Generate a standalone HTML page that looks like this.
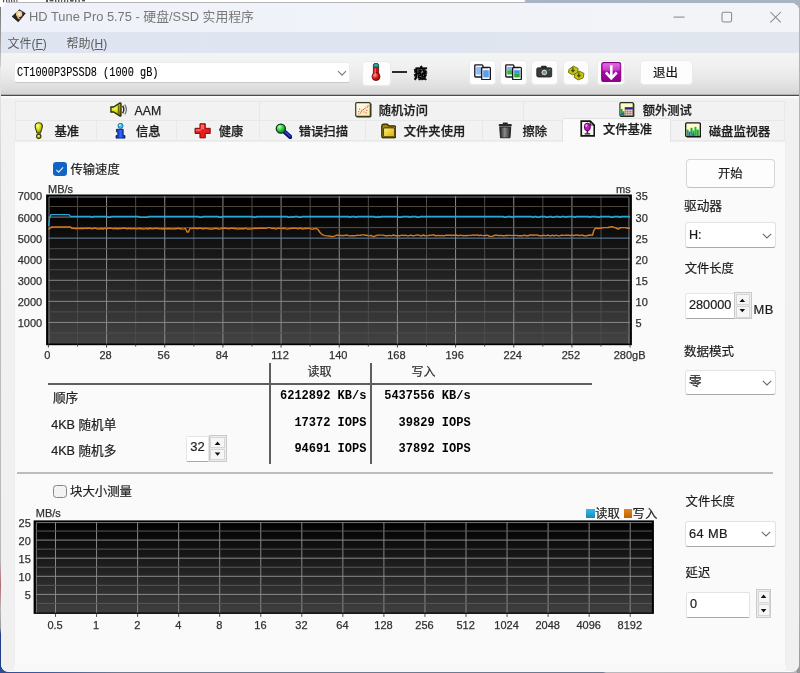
<!DOCTYPE html>
<html lang="zh-CN">
<head>
<meta charset="utf-8">
<title>HD Tune Pro 5.75 - 硬盘/SSD 实用程序</title>
<style>
html,body{margin:0;padding:0;}
body{width:800px;height:673px;overflow:hidden;position:relative;background:#8c949c;
  font-family:"Liberation Sans","Noto Sans CJK SC",sans-serif;font-size:12px;color:#1a1a1a;}
.abs{position:absolute;}
#desk-top{left:0;top:0;width:800px;height:4px;background:linear-gradient(90deg,#fff 0,#fff 524px,#a6b4c3 526px,#a6b4c3 100%);}
#desk-left{left:0;top:0;width:2.4px;height:673px;background:linear-gradient(180deg,#fff 0,#e8e8e8 60px,#bdbdbd 300px,#b9b9b9 560px,#b06a72 585px,#b9b9b9 610px,#9a9a9a 628px,#1f3f8a 634px,#1f3f8a 100%);}
#desk-bottom{left:0;top:669px;width:800px;height:4px;background:linear-gradient(90deg,#2c4c97 0,#3a5aa0 40px,#6e7c94 120px,#6c7a92 603px,#b6babf 606px,#b0b4ba 100%);}
#win{will-change:transform;left:1.1px;top:3px;width:797.6px;height:668.5px;box-shadow:inset 0 0 0 1px rgba(255,255,255,0.75);border-radius:8px;background:#f0f0f0;overflow:hidden;}
#titlebar{left:0;top:0;width:798px;height:29px;background:linear-gradient(90deg,#eef1f9 0,#f1f3f9 50%,#f3f4f8 100%);}
#title{left:28.1px;top:3.1px;font-size:12.85px;color:#787878;white-space:nowrap;letter-spacing:0px;}
#menubar{left:0;top:29px;width:798px;height:21px;background:linear-gradient(90deg,#dee5f1 0,#dfe5f0 50%,#e1e6ee 100%);}
.menu{top:2.2px;font-size:12px;color:#5c5c5c;white-space:nowrap;}
#toolbar{left:0;top:50px;width:798px;height:43px;background:linear-gradient(180deg,#f4f4f4 0,#f1f1f1 12px,#e9e9e9 24px,#dedede 35px,#d2d2d2 41.4px,#4a4a4a 41.8px,#4a4a4a 43px);}
#tabarea{left:0;top:93px;width:798px;height:575px;background:linear-gradient(180deg,#fbfbfb 0,#fbfbfb 1.5px,#f1f1f1 2.5px,#f0f0f0 100%);}
.tab{box-sizing:border-box;border:1px solid #e8e8e8;background:#f2f2f2;height:21px;white-space:nowrap;font-size:12px;color:#111;}
.tab span{position:absolute;top:4px;}
#pane{left:13.1px;top:137.5px;width:771.8px;height:526.5px;background:#fafafa;border:1px solid #eeeeee;box-sizing:border-box;}
.lbl{position:absolute;white-space:nowrap;font-size:12px;color:#1a1a1a;-webkit-text-stroke:0.22px #2a2a2a;}
.ax{position:absolute;white-space:nowrap;font-size:11px;color:#2a2a2a;line-height:11px;-webkit-text-stroke:0.25px #3a3a3a;margin-top:0.4px;}
.axr{text-align:right;width:40px;}
.axc{text-align:center;width:40px;margin-left:-20px;}
.mono{position:absolute;white-space:pre;font-family:"Liberation Mono",monospace;font-weight:bold;font-size:12px;color:#000;line-height:12px;}
.combo{position:absolute;box-sizing:border-box;background:#fff;border:1px solid #e2e2e2;border-bottom-color:#a9a9a9;border-radius:3px;}
.btn{position:absolute;box-sizing:border-box;background:#fdfdfd;border:1px solid #d6d6d6;border-bottom-color:#c2c2c2;border-radius:4px;text-align:center;}
.tbtn{position:absolute;box-sizing:border-box;background:#fdfdfd;border:1px solid #ebebeb;border-radius:4px;}
.tabt{position:absolute;white-space:nowrap;font-size:12.3px;color:#1c1c1c;line-height:14px;font-weight:500;-webkit-text-stroke:0.25px #2a2a2a;}
#drive{font-family:"Liberation Mono","Noto Sans CJK SC",monospace;font-size:12px;line-height:13px;color:#000;white-space:pre;transform-origin:0 0;transform:scaleX(0.854);-webkit-text-stroke:0.12px #000;}
#degc{font-family:"Liberation Sans","Noto Sans CJK SC","Noto Sans CJK TC","Noto Sans CJK JP",sans-serif;font-weight:900;font-size:13.6px;line-height:16px;color:#000;-webkit-text-stroke:0.4px #000;}
</style>
</head>
<body>

<svg width="0" height="0" style="position:absolute">
<defs>
<radialGradient id="rgY" cx="0.35" cy="0.3" r="0.8"><stop offset="0" stop-color="#fbffa0"/><stop offset="0.5" stop-color="#d6dc00"/><stop offset="1" stop-color="#6e6e00"/></radialGradient>
<radialGradient id="rgG" cx="0.35" cy="0.3" r="0.8"><stop offset="0" stop-color="#b8ffb0"/><stop offset="0.55" stop-color="#22c43a"/><stop offset="1" stop-color="#0a7a1a"/></radialGradient>
<radialGradient id="rgR" cx="0.35" cy="0.3" r="0.8"><stop offset="0" stop-color="#ff9a9a"/><stop offset="0.5" stop-color="#e01818"/><stop offset="1" stop-color="#8a0000"/></radialGradient>
<linearGradient id="lgP" x1="0" y1="0" x2="0" y2="1"><stop offset="0" stop-color="#e050e0"/><stop offset="0.5" stop-color="#b000b0"/><stop offset="1" stop-color="#8a008a"/></linearGradient>
<linearGradient id="lgF" x1="0" y1="0" x2="1" y2="1"><stop offset="0" stop-color="#fff27a"/><stop offset="1" stop-color="#d8ac00"/></linearGradient>
<linearGradient id="lgRand" x1="0" y1="0" x2="0.6" y2="1"><stop offset="0" stop-color="#ffffff"/><stop offset="1" stop-color="#fbeeb4"/></linearGradient>
<linearGradient id="lgT" x1="0" y1="0" x2="1" y2="0"><stop offset="0" stop-color="#222"/><stop offset="0.45" stop-color="#8a8a8a"/><stop offset="1" stop-color="#222"/></linearGradient>
<linearGradient id="lgB" x1="0" y1="0" x2="1" y2="0"><stop offset="0" stop-color="#0a2a9a"/><stop offset="0.5" stop-color="#2a6aff"/><stop offset="1" stop-color="#0a2a9a"/></linearGradient>

<symbol id="i-therm" viewBox="0 0 10 18">
  <rect x="2.4" y="0.5" width="5.2" height="12.5" rx="2" fill="#cc1010" stroke="#5a0a0a" stroke-width="0.8"/>
  <path d="M2.4 3.9 V2.5 Q2.4 0.5 4.4 0.5 H5.6 Q7.6 0.5 7.6 2.5 V3.9 Z" fill="#2aa8a0" stroke="#1a5a56" stroke-width="0.8"/>
  <circle cx="5" cy="13.6" r="4" fill="url(#rgR)" stroke="#5a0a0a" stroke-width="0.8"/>
  <rect x="3.6" y="5.4" width="1.2" height="7" fill="#ff8a8a" opacity="0.8"/>
</symbol>
<symbol id="i-copy" viewBox="0 0 18 17">
  <rect x="0.8" y="0.8" width="8.4" height="12.6" rx="1" fill="#f2f7ff" stroke="#1c1622" stroke-width="1.4"/>
  <rect x="2.3" y="3" width="5.4" height="7.8" fill="#8cbcf0"/>
  <rect x="7.9" y="3.6" width="9" height="12.6" rx="1" fill="#f2f7ff" stroke="#1c1622" stroke-width="1.4"/>
  <rect x="9.5" y="6.4" width="5.8" height="7.4" fill="#5e9ce8"/>
  <path d="M14.4 4.4 L16.1 4.4 L16.1 6.2 Z" fill="#fff"/>
</symbol>
<symbol id="i-copyimg" viewBox="0 0 18 17">
  <rect x="0.8" y="0.8" width="8.4" height="12.6" rx="1" fill="#f2f7ff" stroke="#1c1622" stroke-width="1.4"/>
  <rect x="2.3" y="3" width="5.4" height="3.4" fill="#7ab4f0"/><rect x="2.3" y="6.4" width="5.4" height="4.4" fill="#34b83c"/>
  <rect x="7.9" y="3.6" width="9" height="12.6" rx="1" fill="#f2f7ff" stroke="#1c1622" stroke-width="1.4"/>
  <rect x="9.5" y="6.4" width="5.8" height="3.2" fill="#4a90e8"/><rect x="9.5" y="9.6" width="5.8" height="4.2" fill="#26ac2c"/>
  <path d="M14.4 4.4 L16.1 4.4 L16.1 6.2 Z" fill="#fff"/>
</symbol>
<symbol id="i-cam" viewBox="0 0 18 14">
  <rect x="5.5" y="0.8" width="6" height="3.4" rx="0.8" fill="#2a2a2a"/>
  <rect x="0.8" y="3" width="16.4" height="10" rx="1.6" fill="#3a3a3a" stroke="#1a1a1a" stroke-width="0.8"/>
  <circle cx="9" cy="8" r="3.6" fill="#cfd4d0" stroke="#1a1a1a" stroke-width="0.9"/>
  <circle cx="9" cy="8" r="1.8" fill="#7a8a80"/>
  <rect x="13.6" y="4.6" width="2" height="1.6" fill="#2a9a5a"/>
</symbol>
<symbol id="i-save2" viewBox="0 0 20 18">
  <path d="M2 5 L7 1.2 L12.5 4 L11.5 9 L6 11 L1.5 8.5 Z" fill="#c6c612" stroke="#6a6a08" stroke-width="1"/>
  <path d="M6.5 2.6 L6.5 7 M4.8 5.4 L6.5 7.6 L8.4 5.4" stroke="#4a4a0a" stroke-width="1.3" fill="none"/>
  <path d="M8.5 10.5 L13.5 6.8 L19 9.5 L18 14.5 L12.5 16.8 L8 14 Z" fill="#c6c612" stroke="#6a6a08" stroke-width="1"/>
  <path d="M13.2 8.2 L13.2 12.6 M11.5 11 L13.2 13.2 L15.1 11" stroke="#4a4a0a" stroke-width="1.3" fill="none"/>
</symbol>
<symbol id="i-down" viewBox="0 0 20 20">
  <rect x="0.5" y="0.5" width="19" height="19" rx="2.2" fill="url(#lgP)" stroke="#7a007a" stroke-width="1"/>
  <rect x="1.6" y="1.6" width="16.8" height="7" rx="1.6" fill="#fff" opacity="0.18"/>
  <path d="M10 3.2 L10 15" stroke="#fff" stroke-width="2.6"/>
  <path d="M4.6 10.4 L10 16.2 L15.4 10.4" stroke="#fff" stroke-width="2.6" fill="none" stroke-linejoin="miter"/>
</symbol>

<symbol id="i-speaker" viewBox="0 0 18 15">
  <path d="M0.9 5 L3.6 5 L10 0.9 Q11 0.6 11 1.6 L11 13.4 Q11 14.4 10 14.1 L3.6 10 L0.9 10 Z" fill="url(#rgY)" stroke="#2e2c00" stroke-width="1.3"/>
  <path d="M8.6 3.4 L8.6 11.6" stroke="#6a6600" stroke-width="1.4"/>
  <path d="M12.6 3.8 Q15.2 7.5 12.6 11.2" stroke="#2a2a2a" stroke-width="1.5" fill="none"/>
  <path d="M14.8 2.6 Q18 7.5 14.8 12.4" stroke="#6a6a6a" stroke-width="1.2" fill="none"/>
</symbol>
<symbol id="i-rand" viewBox="0 0 17 16">
  <rect x="0.9" y="0.9" width="15.6" height="14.6" rx="1.4" fill="#2e2e14"/>
  <rect x="0.7" y="0.7" width="14.6" height="13.6" rx="1" fill="url(#lgRand)" stroke="#3a3a1a" stroke-width="1.2"/>
  <g fill="#e0684a"><rect x="3" y="9" width="1.2" height="1.2"/><rect x="5" y="10.3" width="1.2" height="1.2"/><rect x="6.4" y="7.6" width="1.2" height="1.2"/><rect x="8.2" y="9.4" width="1.2" height="1.2"/><rect x="9.4" y="6" width="1.2" height="1.2"/><rect x="11.2" y="7.8" width="1.2" height="1.2"/><rect x="12" y="4.4" width="1.2" height="1.2"/><rect x="4" y="6.6" width="1.2" height="1.2"/><rect x="10.6" y="10.4" width="1.2" height="1.2"/></g>
  <g fill="#5a7ad8"><rect x="3.4" y="11.4" width="1" height="1"/><rect x="5.8" y="8.8" width="1" height="1"/><rect x="8" y="7" width="1" height="1"/><rect x="10.4" y="4.6" width="1" height="1"/><rect x="12.6" y="3" width="1" height="1"/></g>
</symbol>
<symbol id="i-extra" viewBox="0 0 16 16">
  <rect x="1" y="1" width="14.6" height="14.6" rx="1.2" fill="#1a2a1a"/>
  <rect x="0.7" y="0.7" width="13.8" height="13.8" rx="1" fill="#fffac8" stroke="#22301c" stroke-width="1.2"/>
  <rect x="1.4" y="7.2" width="2" height="6.8" fill="#14a834"/><rect x="3.4" y="9.6" width="1.8" height="4.4" fill="#10902c"/><rect x="1.4" y="11.6" width="3.8" height="2.4" fill="#2a5ad8"/>
  <rect x="6" y="5.6" width="8" height="8.4" fill="#f6dcd4" stroke="#6a3a4a" stroke-width="0.6"/>
  <rect x="6" y="5.6" width="8" height="2.2" fill="#1c2a8a"/>
  <path d="M6 10 H14 M6 12 H14 M8.6 7.8 V14 M11.2 7.8 V14" stroke="#9a5a6a" stroke-width="0.6"/>
</symbol>
<symbol id="i-excl" viewBox="0 0 10 18">
  <path d="M5 0.7 C8.6 0.7 9.2 3 8.6 5.8 L6.8 11.6 L3.2 11.6 L1.4 5.8 C0.8 3 1.4 0.7 5 0.7 Z" fill="url(#rgY)" stroke="#34320a" stroke-width="1.1"/>
  <circle cx="5" cy="15" r="2.3" fill="url(#rgY)" stroke="#34320a" stroke-width="1.1"/>
</symbol>
<symbol id="i-info" viewBox="0 0 11 16">
  <circle cx="5.5" cy="2.9" r="2.6" fill="#38c8ec" stroke="#0a5a8a" stroke-width="0.8"/>
  <circle cx="4.8" cy="2.2" r="0.9" fill="#c8f4ff"/>
  <path d="M1.4 6.4 H8.2 V12.8 H10 V15.4 H1 V12.8 H2.8 V9 H1.4 Z" fill="url(#lgB)" stroke="#06186a" stroke-width="0.9"/>
</symbol>
<symbol id="i-cross" viewBox="0 0 17 16">
  <path d="M5.8 0.8 H11.2 V5.4 H16.2 V10.6 H11.2 V15.2 H5.8 V10.6 H0.8 V5.4 H5.8 Z" fill="#e81c1c" stroke="#7a0a0a" stroke-width="1"/>
  <path d="M6.6 1.8 H10 V6.4 H6.6 Z M1.8 6.4 H6.6 V8 H1.8 Z" fill="#ff8a8a" opacity="0.7"/>
</symbol>
<symbol id="i-mag" viewBox="0 0 18 16">
  <path d="M9.6 8.6 L15.6 14" stroke="#081468" stroke-width="4.4" stroke-linecap="round"/>
  <path d="M10 8.4 L15.4 13.2" stroke="#2a4ae8" stroke-width="1.5" stroke-linecap="round"/>
  <circle cx="6" cy="5.4" r="4.7" fill="url(#rgG)" stroke="#0a3a14" stroke-width="1.3"/>
</symbol>
<symbol id="i-folder" viewBox="0 0 16 16">
  <path d="M0.8 3.2 Q0.8 1.2 2.8 1.2 L5.8 1.2 Q6.8 1.2 7.4 2.2 L8 3 L13.2 3 Q15.2 3 15.2 5 L15.2 13.2 Q15.2 15.2 13.2 15.2 L2.8 15.2 Q0.8 15.2 0.8 13.2 Z" fill="#a08400" stroke="#2a2200" stroke-width="1.2"/>
  <rect x="2.6" y="5" width="11.2" height="9" rx="1.2" fill="url(#lgF)" stroke="#3a2e00" stroke-width="0.9"/>
</symbol>
<symbol id="i-trash" viewBox="0 0 15 17">
  <rect x="5" y="0.4" width="5" height="2" fill="#222"/>
  <rect x="0.8" y="2" width="13.4" height="2.6" rx="0.8" fill="#2a2a2a"/>
  <path d="M1.8 5.2 H13.2 L12.4 16.2 H2.6 Z" fill="url(#lgT)" stroke="#111" stroke-width="0.9"/>
</symbol>
<symbol id="i-fbench" viewBox="0 0 16 18">
  <path d="M1.1 1.1 H10.6 L14.9 5.4 V16.9 H1.1 Z" fill="#fbfbf4" stroke="#161616" stroke-width="1.8"/>
  <path d="M10.6 1.1 V5.4 H14.9" fill="none" stroke="#161616" stroke-width="1.1"/>
  <ellipse cx="7.6" cy="7.4" rx="3.2" ry="4.1" fill="#c414c4" stroke="#4a004a" stroke-width="0.9"/>
  <ellipse cx="6.6" cy="6" rx="1.1" ry="1.5" fill="#f4a0f4"/>
  <rect x="6.8" y="11.2" width="1.7" height="3" fill="#5a005a"/>
  <rect x="4.8" y="14" width="5.8" height="1.4" fill="#2a2a2a"/>
</symbol>
<symbol id="i-mon" viewBox="0 0 17 16">
  <rect x="1" y="1" width="15.6" height="14.6" rx="1.4" fill="#101010"/>
  <rect x="0.7" y="0.7" width="14.8" height="13.8" rx="1" fill="#fffbd0" stroke="#161616" stroke-width="1.3"/>
  <g><rect x="1.6" y="7.6" width="2" height="6.4" fill="#12b02a"/><rect x="3.6" y="9.6" width="2" height="4.4" fill="#2a5ae0"/><rect x="5.6" y="5.8" width="2" height="8.2" fill="#12b02a"/><rect x="7.6" y="8.6" width="2" height="5.4" fill="#18b830"/><rect x="9.6" y="4.8" width="2" height="9.2" fill="#18c030"/><rect x="11.6" y="7.6" width="2.4" height="6.4" fill="#12b02a"/><rect x="7.6" y="11.4" width="2" height="2.6" fill="#2a5ae0"/></g>
</symbol>
</defs>
</svg>

<div class="abs" style="left:0;top:0;width:14px;height:14px;background:#fff"></div>
<div id="desk-top" class="abs"></div>
<svg class="abs" style="left:0;top:0" width="260" height="3" viewBox="0 0 260 3"><g fill="#555"><rect x="3" y="0" width="1.2" height="2.4"/><rect x="6" y="0" width="1.2" height="2.4"/><rect x="8.6" y="0" width="1.2" height="2.2"/><rect x="11" y="0" width="1.2" height="2.4"/><rect x="13.6" y="0" width="1.2" height="2.4"/><rect x="16.4" y="0" width="1" height="2"/><rect x="46" y="0" width="2" height="2"/><rect x="49.5" y="0" width="4" height="1.4"/><rect x="55" y="0" width="1.4" height="2.2"/><rect x="58" y="0" width="1.4" height="2.2"/><rect x="61" y="0" width="1.2" height="2"/><rect x="64" y="0" width="1.4" height="2.2"/><rect x="67" y="0" width="1.2" height="2"/><rect x="70" y="0" width="3.6" height="1.6"/><rect x="75" y="0" width="1.4" height="2.2"/><rect x="78.4" y="0" width="1.4" height="2.2"/><rect x="82" y="0" width="3" height="1.4"/></g></svg>
<div id="desk-left" class="abs"></div>
<div class="abs" style="left:7px;top:2.2px;width:519px;height:1.2px;background:#b4b4b4"></div>
<div class="abs" style="left:0.4px;top:7px;width:1px;height:60px;background:linear-gradient(180deg,#777,#999 50%,#d0d0d0)"></div>
<div id="desk-bottom" class="abs"></div>
<div class="abs" style="left:797px;top:0;width:3px;height:673px;background:linear-gradient(180deg,#a6b4c3 0,#b2b4b8 80px,#b4b4b4 200px,#b2b2b2 600px,#9a9ea4 660px,#8c949c 673px)"></div>
<div id="win" class="abs">
  <div id="titlebar" class="abs"></div>
  <div id="title" class="abs">HD Tune Pro 5.75 - 硬盘/SSD 实用程序</div>
  <div id="menubar" class="abs">
    <div class="menu abs" style="left:6.5px">文件(<u>F</u>)</div>
    <div class="menu abs" style="left:65.5px">帮助(<u>H</u>)</div>
  </div>
  <div id="toolbar" class="abs"></div>
  <div id="tabarea" class="abs"></div>
  <div id="pane" class="abs"></div>
  <div class="abs" style="left:13.1px;top:662px;width:771.8px;height:7px;background:#f8f8f8"></div>
</div>
<div id="ov" class="abs" style="left:0;top:0;width:800px;height:673px;will-change:transform">
<!--TB-->
<div class="combo" style="left:13.5px;top:61.8px;width:336.4px;height:20.8px;border-color:#ececec;border-bottom-color:#c8c8c8"></div>
<div class="abs" id="drive" style="left:17px;top:67.3px">CT1000P3PSSD8 (1000 gB)</div>
<svg class="abs" style="left:336.5px;top:69.5px" width="10" height="7" viewBox="0 0 10 7"><path d="M1 1.2 L5 5.2 L9 1.2" fill="none" stroke="#777" stroke-width="1.1"/></svg>
<div class="tbtn" style="left:362.3px;top:60.5px;width:28.5px;height:25px"></div>
<svg class="abs" style="left:371.4px;top:63px" width="10" height="18"><use href="#i-therm"/></svg>
<div class="abs" style="left:392.2px;top:71px;width:14.8px;height:2px;background:#2a2a2a"></div>
<div class="abs" id="degc" style="left:413.8px;top:65.9px">癈</div>
<div class="tbtn" style="left:469.0px;top:60.4px;width:26.6px;height:24.4px"></div>
<svg class="abs" style="left:473.8px;top:63.6px" width="17.4" height="16.5"><use href="#i-copy"/></svg>
<div class="tbtn" style="left:500.2px;top:60.4px;width:26.6px;height:24.4px"></div>
<svg class="abs" style="left:505.2px;top:63.6px" width="17.4" height="16.5"><use href="#i-copyimg"/></svg>
<div class="tbtn" style="left:531.4px;top:60.4px;width:26.6px;height:24.4px"></div>
<svg class="abs" style="left:536.4px;top:65.4px" width="16.6" height="13"><use href="#i-cam"/></svg>
<div class="tbtn" style="left:562.6px;top:60.4px;width:26.6px;height:24.4px"></div>
<svg class="abs" style="left:566.9px;top:64.6px" width="18" height="16"><use href="#i-save2"/></svg>
<div class="tbtn" style="left:597.3px;top:60.4px;width:27.6px;height:24.4px"></div>
<svg class="abs" style="left:601px;top:61.5px" width="20.6" height="20.2"><use href="#i-down"/></svg>
<div class="tbtn" style="left:639.5px;top:60.3px;width:53.2px;height:24.4px"></div>
<div class="lbl" style="left:653px;top:66.2px;font-size:12.5px;line-height:14px;color:#111">退出</div>
<!--/TB-->
<!--TABS-->
<div class="tab abs" style="left:14.5px;top:100.5px;width:245.25px;height:20.5px"></div>
<svg class="abs" style="left:109.5px;top:102px" width="18" height="15"><use href="#i-speaker"/></svg>
<div class="tabt" style="left:134.5px;top:103.6px">AAM</div>
<div class="tab abs" style="left:258.75px;top:100.5px;width:265.25px;height:20.5px"></div>
<svg class="abs" style="left:354.5px;top:102px" width="17" height="16"><use href="#i-rand"/></svg>
<div class="tabt" style="left:378.75px;top:103.6px">随机访问</div>
<div class="tab abs" style="left:523px;top:100.5px;width:262.20px;height:20.5px"></div>
<svg class="abs" style="left:618.75px;top:102px" width="16" height="15.5"><use href="#i-extra"/></svg>
<div class="tabt" style="left:642.7px;top:103.6px">额外测试</div>
<div class="tab abs" style="left:14.5px;top:120px;width:82.75px;height:20.5px"></div>
<svg class="abs" style="left:34px;top:121.8px" width="9.5" height="17.2"><use href="#i-excl"/></svg>
<div class="tabt" style="left:54.5px;top:124.8px">基准</div>
<div class="tab abs" style="left:96.25px;top:120px;width:81.00px;height:20.5px"></div>
<svg class="abs" style="left:115px;top:123px" width="11" height="15.75"><use href="#i-info"/></svg>
<div class="tabt" style="left:136px;top:124.8px">信息</div>
<div class="tab abs" style="left:176.25px;top:120px;width:83.50px;height:20.5px"></div>
<svg class="abs" style="left:193.75px;top:123px" width="17.25" height="15.75"><use href="#i-cross"/></svg>
<div class="tabt" style="left:218.75px;top:124.8px">健康</div>
<div class="tab abs" style="left:258.75px;top:120px;width:106.75px;height:20.5px"></div>
<svg class="abs" style="left:274.5px;top:122.5px" width="17.5" height="16.25"><use href="#i-mag"/></svg>
<div class="tabt" style="left:298.75px;top:124.8px">错误扫描</div>
<div class="tab abs" style="left:364.5px;top:120px;width:118.50px;height:20.5px"></div>
<svg class="abs" style="left:380.5px;top:123px" width="15.75" height="15.75"><use href="#i-folder"/></svg>
<div class="tabt" style="left:403.75px;top:124.8px">文件夹使用</div>
<div class="tab abs" style="left:482px;top:120px;width:81.00px;height:20.5px"></div>
<svg class="abs" style="left:498px;top:122px" width="14.5" height="16.75"><use href="#i-trash"/></svg>
<div class="tabt" style="left:522.5px;top:124.8px">擦除</div>
<div class="tab abs" style="left:670px;top:120px;width:115.20px;height:20.5px"></div>
<svg class="abs" style="left:684.5px;top:122px" width="16.75" height="16"><use href="#i-mon"/></svg>
<div class="tabt" style="left:708.8px;top:124.8px">磁盘监视器</div>
<div class="abs" style="left:561.5px;top:117.5px;width:109px;height:24px;background:#fafafa;border:1px solid #e2e2e2;border-bottom:none;box-sizing:border-box;border-radius:2px 2px 0 0"></div>
<svg class="abs" style="left:579.5px;top:120px" width="15.5" height="17"><use href="#i-fbench"/></svg>
<div class="tabt" style="left:602.9px;top:123.2px">文件基准</div>
<!--/TABS-->
<!--CONTENT-->
<svg class="abs" style="left:660px;top:0" width="140" height="34" viewBox="660 0 140 34"><g stroke="#888" stroke-width="1.05" fill="none"><path d="M673.6 17.1 H684.6"/><rect x="722" y="12.3" width="9.6" height="9.6" rx="1.6"/><path d="M770.4 12 L780.8 22.4 M780.8 12 L770.4 22.4"/></g></svg>
<svg class="abs" style="left:10.6px;top:9.4px" width="15.4" height="14" viewBox="0 0 17 16"><path d="M1 8.6 L9.4 0.8 L16 5 L8 14.6 Z" fill="#2a2420" stroke="#111" stroke-width="0.8"/><circle cx="9" cy="5.6" r="3.6" fill="#f0c890"/><circle cx="9" cy="5.6" r="1.4" fill="#fff0d8"/><path d="M7 9 L9.6 11.4" stroke="#d8b080" stroke-width="1.6"/></svg>
<div class="abs" style="left:53.2px;top:162.3px;width:13.5px;height:13.5px;background:#1164c6;border-radius:3.2px"></div>
<svg class="abs" style="left:53.2px;top:162.6px" width="13.4" height="13.2" viewBox="0 0 13.4 13.2"><path d="M3.4 6.9 L5.7 9.2 L10.1 4.4" fill="none" stroke="#eaf2ff" stroke-width="1.05"/></svg>
<div class="lbl" style="left:70.5px;top:163.4px;font-size:12.3px;line-height:14px">传输速度</div>
<div class="ax" style="left:48px;top:183.6px">MB/s</div>
<div class="ax" style="left:616px;top:183.6px">ms</div>
<div class="ax axr" style="left:2.2px;top:191.1px">7000</div>
<div class="ax axr" style="left:2.2px;top:212.2px">6000</div>
<div class="ax axr" style="left:2.2px;top:233.2px">5000</div>
<div class="ax axr" style="left:2.2px;top:254.3px">4000</div>
<div class="ax axr" style="left:2.2px;top:275.4px">3000</div>
<div class="ax axr" style="left:2.2px;top:296.4px">2000</div>
<div class="ax axr" style="left:2.2px;top:317.5px">1000</div>
<div class="ax" style="left:635.6px;top:191.1px">35</div>
<div class="ax" style="left:635.6px;top:212.2px">30</div>
<div class="ax" style="left:635.6px;top:233.2px">25</div>
<div class="ax" style="left:635.6px;top:254.3px">20</div>
<div class="ax" style="left:635.6px;top:275.4px">15</div>
<div class="ax" style="left:635.6px;top:296.4px">10</div>
<div class="ax" style="left:635.6px;top:317.5px">5</div>
<div class="ax axc" style="left:47.4px;top:349.8px">0</div>
<div class="ax axc" style="left:105.6px;top:349.8px">28</div>
<div class="ax axc" style="left:163.7px;top:349.8px">56</div>
<div class="ax axc" style="left:221.9px;top:349.8px">84</div>
<div class="ax axc" style="left:280.1px;top:349.8px">112</div>
<div class="ax axc" style="left:338.3px;top:349.8px">140</div>
<div class="ax axc" style="left:396.4px;top:349.8px">168</div>
<div class="ax axc" style="left:454.6px;top:349.8px">196</div>
<div class="ax axc" style="left:512.8px;top:349.8px">224</div>
<div class="ax axc" style="left:570.9px;top:349.8px">252</div>
<div class="ax" style="left:613.7px;top:349.8px">280gB</div>
<div class="abs" style="left:48px;top:382.7px;width:544px;height:2px;background:#5e5e5e"></div>
<div class="abs" style="left:268.6px;top:363px;width:2px;height:101px;background:#5e5e5e"></div>
<div class="abs" style="left:370.3px;top:363px;width:2px;height:101px;background:#5e5e5e"></div>
<div class="lbl" style="left:307.5px;top:365px;font-size:12px;line-height:14px;color:#333">读取</div>
<div class="lbl" style="left:411.5px;top:365px;font-size:12px;line-height:14px;color:#333">写入</div>
<div class="lbl" style="left:53px;top:390.5px;font-size:12.6px;line-height:14px">顺序</div>
<div class="lbl" style="left:51.2px;top:418px;font-size:12.6px;line-height:14px">4KB 随机单</div>
<div class="lbl" style="left:51.2px;top:444px;font-size:12.6px;line-height:14px">4KB 随机多</div>
<div class="mono" style="left:280px;top:389.6px">6212892 KB/s</div>
<div class="mono" style="left:384.2px;top:389.6px">5437556 KB/s</div>
<div class="mono" style="left:280px;top:417.0px">  17372 IOPS</div>
<div class="mono" style="left:384.2px;top:417.0px">  39829 IOPS</div>
<div class="mono" style="left:280px;top:443.0px">  94691 IOPS</div>
<div class="mono" style="left:384.2px;top:443.0px">  37892 IOPS</div>
<div class="abs" style="left:186.4px;top:435.8px;width:23px;height:26px;background:#fff;border:1px solid #e6e6e6;border-bottom-color:#a9a9a9;box-sizing:border-box;border-radius:2px 0 0 2px"></div>
<div class="abs" style="left:208.7px;top:435.2px;width:18.3px;height:27px;background:#ececec;border:1px solid #cacaca;box-sizing:border-box"></div>
<div class="abs" style="left:210.4px;top:437px;width:15px;height:11px;background:#f6f6f6;border:1px solid #d6d6d6;box-sizing:border-box"></div>
<div class="abs" style="left:210.4px;top:449px;width:15px;height:11.4px;background:#f6f6f6;border:1px solid #d6d6d6;box-sizing:border-box"></div>
<svg class="abs" style="left:208.7px;top:435.2px" width="18.3" height="27" viewBox="0 0 18.3 27"><path d="M5.7 9.9 L8.55 6.5 L11.4 9.9 Z M5.7 17.4 L8.55 20.8 L11.4 17.4 Z" fill="#111"/></svg>
<div class="lbl" style="left:190.2px;top:440px;font-size:13px;line-height:14px;color:#222">32</div>
<div class="abs" style="left:16.6px;top:472.2px;width:756.4px;height:1.6px;background:#bcbcbc"></div>
<div class="abs" style="left:53.3px;top:485px;width:13.4px;height:13.4px;background:#f3f3f3;border:1.2px solid #858585;border-radius:3.4px;box-sizing:border-box"></div>
<div class="lbl" style="left:70px;top:485px;font-size:12.4px;line-height:14px">块大小测量</div>
<div class="ax" style="left:35.8px;top:507.4px">MB/s</div>
<div class="ax axr" style="left:-9.2px;top:517.4px">25</div>
<div class="ax axr" style="left:-9.2px;top:535.4px">20</div>
<div class="ax axr" style="left:-9.2px;top:553.4px">15</div>
<div class="ax axr" style="left:-9.2px;top:571.4px">10</div>
<div class="ax axr" style="left:-9.2px;top:589.4px">5</div>
<div class="ax axc" style="left:55.1px;top:619.4px">0.5</div>
<div class="ax axc" style="left:96.1px;top:619.4px">1</div>
<div class="ax axc" style="left:137.2px;top:619.4px">2</div>
<div class="ax axc" style="left:178.2px;top:619.4px">4</div>
<div class="ax axc" style="left:219.3px;top:619.4px">8</div>
<div class="ax axc" style="left:260.4px;top:619.4px">16</div>
<div class="ax axc" style="left:301.4px;top:619.4px">32</div>
<div class="ax axc" style="left:342.4px;top:619.4px">64</div>
<div class="ax axc" style="left:383.5px;top:619.4px">128</div>
<div class="ax axc" style="left:424.5px;top:619.4px">256</div>
<div class="ax axc" style="left:465.6px;top:619.4px">512</div>
<div class="ax axc" style="left:506.6px;top:619.4px">1024</div>
<div class="ax axc" style="left:547.7px;top:619.4px">2048</div>
<div class="ax axc" style="left:588.7px;top:619.4px">4096</div>
<div class="ax axc" style="left:629.8px;top:619.4px">8192</div>
<div class="abs" style="left:586.2px;top:508.8px;width:8.4px;height:9.2px;background:linear-gradient(180deg,#3ab8e8,#1a88b8)"></div>
<div class="lbl" style="left:595.2px;top:507px;font-size:12.3px;line-height:14px;color:#222">读取</div>
<div class="abs" style="left:623.6px;top:508.8px;width:8.4px;height:9.2px;background:linear-gradient(180deg,#e8841a,#bc6204)"></div>
<div class="lbl" style="left:632.6px;top:507px;font-size:12.3px;line-height:14px;color:#222">写入</div>
<div class="btn" style="left:685.7px;top:159.2px;width:89.3px;height:28.4px"></div>
<div class="lbl" style="left:718px;top:166.9px;font-size:12.3px;line-height:14px">开始</div>
<div class="lbl" style="left:684px;top:199.4px;font-size:12.7px;line-height:14px">驱动器</div>
<div class="combo" style="left:685px;top:222.3px;width:91px;height:25.4px"></div>
<div class="lbl" style="left:689px;top:228px;font-size:12.6px;line-height:14px">H:</div>
<svg class="abs" style="left:761.6px;top:232.8px" width="10" height="6.4" viewBox="0 0 10 6.4"><path d="M0.8 0.8 L5 5 L9.2 0.8" fill="none" stroke="#6a6a6a" stroke-width="1.1"/></svg>
<div class="lbl" style="left:684.7px;top:262.2px;font-size:12.3px;line-height:14px">文件长度</div>
<div class="abs" style="left:685px;top:292.6px;width:50px;height:26.8px;background:#fff;border:1px solid #e6e6e6;border-bottom-color:#a9a9a9;box-sizing:border-box;border-radius:2px 0 0 2px"></div>
<div class="abs" style="left:733.8px;top:292.2px;width:17.9px;height:27.2px;background:#ececec;border:1px solid #cacaca;box-sizing:border-box"></div>
<div class="abs" style="left:735.6px;top:294px;width:14.4px;height:11.2px;background:#f6f6f6;border:1px solid #d6d6d6;box-sizing:border-box"></div>
<div class="abs" style="left:735.6px;top:306.2px;width:14.4px;height:11.4px;background:#f6f6f6;border:1px solid #d6d6d6;box-sizing:border-box"></div>
<svg class="abs" style="left:734.2px;top:292.4px" width="17.2" height="26.4" viewBox="0 0 17.2 26.4"><path d="M5.5 10.1 L8.3 6.8 L11.1 10.1 Z M5.5 17 L8.3 20.3 L11.1 17 Z" fill="#111"/></svg>
<div class="lbl" style="left:689px;top:298px;font-size:12.7px;line-height:14px">280000</div>
<div class="lbl" style="left:753.4px;top:302.8px;font-size:12.9px;line-height:14px;letter-spacing:0.7px">MB</div>
<div class="lbl" style="left:684px;top:345.2px;font-size:12.5px;line-height:14px">数据模式</div>
<div class="combo" style="left:685px;top:369.5px;width:91px;height:25.2px"></div>
<div class="lbl" style="left:689px;top:375px;font-size:12.5px;line-height:14px">零</div>
<svg class="abs" style="left:761.6px;top:379.6px" width="10" height="6.4" viewBox="0 0 10 6.4"><path d="M0.8 0.8 L5 5 L9.2 0.8" fill="none" stroke="#6a6a6a" stroke-width="1.1"/></svg>
<div class="lbl" style="left:685.6px;top:494.6px;font-size:12.3px;line-height:14px">文件长度</div>
<div class="combo" style="left:685px;top:521.2px;width:91px;height:25.6px"></div>
<div class="lbl" style="left:689px;top:527.2px;font-size:12.8px;line-height:14px;letter-spacing:0.4px">64 MB</div>
<svg class="abs" style="left:761.2px;top:531.4px" width="10" height="6.4" viewBox="0 0 10 6.4"><path d="M0.8 0.8 L5 5 L9.2 0.8" fill="none" stroke="#6a6a6a" stroke-width="1.1"/></svg>
<div class="lbl" style="left:685.6px;top:565.6px;font-size:12.3px;line-height:14px">延迟</div>
<div class="abs" style="left:685.6px;top:591.5px;width:64.8px;height:26.3px;background:#fff;border:1px solid #e4e4e4;border-bottom-color:#a9a9a9;box-sizing:border-box;border-radius:2px"></div>
<div class="lbl" style="left:690px;top:596.8px;font-size:12.7px;line-height:14px">0</div>
<div class="abs" style="left:756.2px;top:589px;width:15.2px;height:29px;background:#ececec;border:1px solid #cacaca;box-sizing:border-box"></div>
<div class="abs" style="left:757.7px;top:590.6px;width:12.2px;height:12.4px;background:#f6f6f6;border:1px solid #d6d6d6;box-sizing:border-box"></div>
<div class="abs" style="left:757.7px;top:604px;width:12.2px;height:12.4px;background:#f6f6f6;border:1px solid #d6d6d6;box-sizing:border-box"></div>
<svg class="abs" style="left:756.2px;top:589px" width="15.2" height="29" viewBox="0 0 15.2 29"><path d="M4.8 9 L7.6 5.6 L10.4 9 Z M4.8 20 L7.6 23.4 L10.4 20 Z" fill="#111"/></svg>
<!--/CONTENT-->
</div>
<!-- page-level overlay in absolute page coordinates -->
<svg class="abs" style="left:0;top:0" width="800" height="673" viewBox="0 0 800 673">
<defs>
<linearGradient id="g1" x1="0" y1="0" x2="0" y2="1"><stop offset="0" stop-color="#000"/><stop offset="0.06" stop-color="#000"/><stop offset="1" stop-color="#434343"/></linearGradient>
<linearGradient id="g2" x1="0" y1="0" x2="0" y2="1"><stop offset="0" stop-color="#000"/><stop offset="1" stop-color="#3f3f3f"/></linearGradient>
</defs>
<rect x="46.1" y="194.5" width="585.8000000000001" height="150.7" fill="#000"/>
<rect x="48.4" y="196.0" width="581.7" height="147.5" fill="url(#g1)"/>
<line x1="77.48" y1="196.0" x2="77.48" y2="343.5" stroke="#4c4c4c" stroke-width="1"/>
<line x1="106.57" y1="196.0" x2="106.57" y2="343.5" stroke="#8c8c8c" stroke-width="1"/>
<line x1="135.66" y1="196.0" x2="135.66" y2="343.5" stroke="#4c4c4c" stroke-width="1"/>
<line x1="164.74" y1="196.0" x2="164.74" y2="343.5" stroke="#8c8c8c" stroke-width="1"/>
<line x1="193.83" y1="196.0" x2="193.83" y2="343.5" stroke="#4c4c4c" stroke-width="1"/>
<line x1="222.91" y1="196.0" x2="222.91" y2="343.5" stroke="#8c8c8c" stroke-width="1"/>
<line x1="252.00" y1="196.0" x2="252.00" y2="343.5" stroke="#4c4c4c" stroke-width="1"/>
<line x1="281.08" y1="196.0" x2="281.08" y2="343.5" stroke="#8c8c8c" stroke-width="1"/>
<line x1="310.16" y1="196.0" x2="310.16" y2="343.5" stroke="#4c4c4c" stroke-width="1"/>
<line x1="339.25" y1="196.0" x2="339.25" y2="343.5" stroke="#8c8c8c" stroke-width="1"/>
<line x1="368.34" y1="196.0" x2="368.34" y2="343.5" stroke="#4c4c4c" stroke-width="1"/>
<line x1="397.42" y1="196.0" x2="397.42" y2="343.5" stroke="#8c8c8c" stroke-width="1"/>
<line x1="426.50" y1="196.0" x2="426.50" y2="343.5" stroke="#4c4c4c" stroke-width="1"/>
<line x1="455.59" y1="196.0" x2="455.59" y2="343.5" stroke="#8c8c8c" stroke-width="1"/>
<line x1="484.67" y1="196.0" x2="484.67" y2="343.5" stroke="#4c4c4c" stroke-width="1"/>
<line x1="513.76" y1="196.0" x2="513.76" y2="343.5" stroke="#8c8c8c" stroke-width="1"/>
<line x1="542.85" y1="196.0" x2="542.85" y2="343.5" stroke="#4c4c4c" stroke-width="1"/>
<line x1="571.93" y1="196.0" x2="571.93" y2="343.5" stroke="#8c8c8c" stroke-width="1"/>
<line x1="601.01" y1="196.0" x2="601.01" y2="343.5" stroke="#4c4c4c" stroke-width="1"/>
<polyline points="49.00,343.50 49.00,197.00 628.90,197.00 628.90,343.50" fill="none" stroke="#7a7a7a" stroke-width="1"/>
<line x1="48.4" y1="206.54" x2="630.1" y2="206.54" stroke="#4c463e" stroke-width="1"/>
<line x1="48.4" y1="217.07" x2="630.1" y2="217.07" stroke="#888888" stroke-width="1"/>
<line x1="48.4" y1="227.61" x2="630.1" y2="227.61" stroke="#5c5348" stroke-width="1"/>
<line x1="48.4" y1="238.14" x2="630.1" y2="238.14" stroke="#6b87a2" stroke-width="1"/>
<line x1="48.4" y1="248.68" x2="630.1" y2="248.68" stroke="#4d4d4d" stroke-width="1"/>
<line x1="48.4" y1="259.21" x2="630.1" y2="259.21" stroke="#888888" stroke-width="1"/>
<line x1="48.4" y1="269.75" x2="630.1" y2="269.75" stroke="#4d4d4d" stroke-width="1"/>
<line x1="48.4" y1="280.29" x2="630.1" y2="280.29" stroke="#888888" stroke-width="1"/>
<line x1="48.4" y1="290.82" x2="630.1" y2="290.82" stroke="#4d4d4d" stroke-width="1"/>
<line x1="48.4" y1="301.36" x2="630.1" y2="301.36" stroke="#888888" stroke-width="1"/>
<line x1="48.4" y1="311.89" x2="630.1" y2="311.89" stroke="#4d4d4d" stroke-width="1"/>
<line x1="48.4" y1="322.43" x2="630.1" y2="322.43" stroke="#888888" stroke-width="1"/>
<line x1="48.4" y1="332.96" x2="630.1" y2="332.96" stroke="#4d4d4d" stroke-width="1"/>
<line x1="48.40" y1="344.5" x2="48.40" y2="347.5" stroke="#444" stroke-width="1"/>
<line x1="77.48" y1="344.5" x2="77.48" y2="346.5" stroke="#444" stroke-width="1"/>
<line x1="106.57" y1="344.5" x2="106.57" y2="347.5" stroke="#444" stroke-width="1"/>
<line x1="135.66" y1="344.5" x2="135.66" y2="346.5" stroke="#444" stroke-width="1"/>
<line x1="164.74" y1="344.5" x2="164.74" y2="347.5" stroke="#444" stroke-width="1"/>
<line x1="193.83" y1="344.5" x2="193.83" y2="346.5" stroke="#444" stroke-width="1"/>
<line x1="222.91" y1="344.5" x2="222.91" y2="347.5" stroke="#444" stroke-width="1"/>
<line x1="252.00" y1="344.5" x2="252.00" y2="346.5" stroke="#444" stroke-width="1"/>
<line x1="281.08" y1="344.5" x2="281.08" y2="347.5" stroke="#444" stroke-width="1"/>
<line x1="310.16" y1="344.5" x2="310.16" y2="346.5" stroke="#444" stroke-width="1"/>
<line x1="339.25" y1="344.5" x2="339.25" y2="347.5" stroke="#444" stroke-width="1"/>
<line x1="368.34" y1="344.5" x2="368.34" y2="346.5" stroke="#444" stroke-width="1"/>
<line x1="397.42" y1="344.5" x2="397.42" y2="347.5" stroke="#444" stroke-width="1"/>
<line x1="426.50" y1="344.5" x2="426.50" y2="346.5" stroke="#444" stroke-width="1"/>
<line x1="455.59" y1="344.5" x2="455.59" y2="347.5" stroke="#444" stroke-width="1"/>
<line x1="484.67" y1="344.5" x2="484.67" y2="346.5" stroke="#444" stroke-width="1"/>
<line x1="513.76" y1="344.5" x2="513.76" y2="347.5" stroke="#444" stroke-width="1"/>
<line x1="542.85" y1="344.5" x2="542.85" y2="346.5" stroke="#444" stroke-width="1"/>
<line x1="571.93" y1="344.5" x2="571.93" y2="347.5" stroke="#444" stroke-width="1"/>
<line x1="601.01" y1="344.5" x2="601.01" y2="346.5" stroke="#444" stroke-width="1"/>
<line x1="630.10" y1="344.5" x2="630.10" y2="347.5" stroke="#444" stroke-width="1"/>
<polyline points="48.6,226.0 49.5,218.0 51.0,214.6 69.0,214.6 70.5,216.4 71.0,216.4 72.5,216.4 74.0,216.4 75.5,216.4 77.0,216.4 78.5,216.4 80.0,216.4 81.5,216.4 83.0,216.4 84.5,216.4 86.0,216.4 87.5,216.4 89.0,216.4 90.5,216.4 92.0,217.3 93.5,216.4 95.0,216.4 96.5,216.4 98.0,216.4 99.5,216.4 101.0,216.4 102.5,216.4 104.0,216.4 105.5,216.4 107.0,216.4 108.5,217.3 110.0,217.3 111.5,216.4 113.0,216.4 114.5,216.4 116.0,216.4 117.5,216.4 119.0,216.4 120.5,216.4 122.0,216.4 123.5,216.4 125.0,216.4 126.5,216.4 128.0,216.4 129.5,216.4 131.0,216.4 132.5,216.4 134.0,216.4 135.5,216.4 137.0,216.4 138.5,216.4 140.0,217.3 141.5,217.3 143.0,217.3 144.5,217.3 146.0,217.3 147.5,217.3 149.0,216.4 150.5,216.4 152.0,216.4 153.5,216.4 155.0,216.4 156.5,216.4 158.0,216.4 159.5,216.4 161.0,216.4 162.5,216.4 164.0,216.4 165.5,216.4 167.0,216.4 168.5,216.4 170.0,216.4 171.5,216.4 173.0,216.4 174.5,216.4 176.0,216.4 177.5,216.4 179.0,216.4 180.5,216.4 182.0,216.4 183.5,216.4 185.0,216.4 186.5,216.4 188.0,216.4 189.5,216.4 191.0,216.4 192.5,216.4 194.0,216.4 195.5,216.4 197.0,216.4 198.5,216.4 200.0,217.3 201.5,217.3 203.0,216.4 204.5,216.4 206.0,216.4 207.5,216.4 209.0,216.4 210.5,216.4 212.0,216.4 213.5,216.4 215.0,216.4 216.5,216.4 218.0,216.4 219.5,217.3 221.0,217.3 222.5,216.4 224.0,216.4 225.5,216.4 227.0,216.4 228.5,216.4 230.0,216.4 231.5,216.4 233.0,216.4 234.5,216.4 236.0,216.4 237.5,216.4 239.0,216.4 240.5,216.4 242.0,216.4 243.5,216.4 245.0,216.4 246.5,216.4 248.0,216.4 249.5,216.4 251.0,216.4 252.5,216.4 254.0,217.3 255.5,217.3 257.0,216.4 258.5,216.4 260.0,216.4 261.5,216.4 263.0,216.4 264.5,216.4 266.0,216.4 267.5,216.4 269.0,216.4 270.5,216.4 272.0,216.4 273.5,216.4 275.0,216.4 276.5,216.4 278.0,216.4 279.5,216.4 281.0,216.4 282.5,216.4 284.0,216.4 285.5,216.4 287.0,216.4 288.5,217.3 290.0,217.3 291.5,216.4 293.0,217.3 294.5,216.4 296.0,216.4 297.5,216.4 299.0,217.3 300.5,217.3 302.0,216.4 303.5,216.4 305.0,216.4 306.5,216.4 308.0,216.4 309.5,216.4 311.0,216.4 312.5,216.4 314.0,216.4 315.5,216.4 317.0,216.4 318.5,216.4 320.0,216.4 321.5,216.4 323.0,216.4 324.5,216.4 326.0,216.4 327.5,216.4 329.0,216.4 330.5,216.4 332.0,216.4 333.5,216.4 335.0,216.4 336.5,216.4 338.0,216.4 339.5,216.4 341.0,216.4 342.5,216.4 344.0,216.4 345.5,216.4 347.0,216.4 348.5,216.4 350.0,217.3 351.5,216.4 353.0,216.4 354.5,216.4 356.0,217.3 357.5,216.4 359.0,216.4 360.5,216.4 362.0,216.4 363.5,216.4 365.0,216.4 366.5,216.4 368.0,216.4 369.5,216.4 371.0,216.4 372.5,216.4 374.0,216.4 375.5,217.3 377.0,217.3 378.5,216.4 380.0,217.3 381.5,216.4 383.0,216.4 384.5,216.4 386.0,216.4 387.5,216.4 389.0,216.4 390.5,216.4 392.0,216.4 393.5,216.4 395.0,216.4 396.5,216.4 398.0,216.4 399.5,217.3 401.0,217.3 402.5,216.4 404.0,216.4 405.5,216.4 407.0,216.4 408.5,216.4 410.0,217.3 411.5,216.4 413.0,216.4 414.5,216.4 416.0,216.4 417.5,217.3 419.0,217.3 420.5,216.4 422.0,216.4 423.5,216.4 425.0,216.4 426.5,216.4 428.0,216.4 429.5,216.4 431.0,216.4 432.5,216.4 434.0,216.4 435.5,216.4 437.0,216.4 438.5,216.4 440.0,216.4 441.5,216.4 443.0,216.4 444.5,216.4 446.0,216.4 447.5,216.4 449.0,216.4 450.5,216.4 452.0,216.4 453.5,216.4 455.0,216.4 456.5,216.4 458.0,216.4 459.5,216.4 461.0,216.4 462.5,216.4 464.0,216.4 465.5,216.4 467.0,216.4 468.5,216.4 470.0,216.4 471.5,216.4 473.0,216.4 474.5,216.4 476.0,216.4 477.5,216.4 479.0,216.4 480.5,216.4 482.0,216.4 483.5,216.4 485.0,216.4 486.5,216.4 488.0,216.4 489.5,216.4 491.0,216.4 492.5,216.4 494.0,216.4 495.5,216.4 497.0,216.4 498.5,216.4 500.0,216.4 501.5,216.4 503.0,216.4 504.5,217.3 506.0,217.3 507.5,216.4 509.0,216.4 510.5,216.4 512.0,217.3 513.5,216.4 515.0,216.4 516.5,216.4 518.0,216.4 519.5,216.4 521.0,216.4 522.5,216.4 524.0,216.4 525.5,216.4 527.0,216.4 528.5,216.4 530.0,216.4 531.5,216.4 533.0,217.3 534.5,216.4 536.0,216.4 537.5,217.3 539.0,217.3 540.5,216.4 542.0,216.4 543.5,216.4 545.0,216.4 546.5,217.3 548.0,217.3 549.5,216.4 551.0,216.4 552.5,217.3 554.0,217.3 555.5,216.4 557.0,216.4 558.5,216.4 560.0,217.3 561.5,216.4 563.0,216.4 564.5,216.4 566.0,217.3 567.5,216.4 569.0,216.4 570.5,216.4 572.0,216.4 573.5,216.4 575.0,217.3 576.5,216.4 578.0,216.4 579.5,216.4 581.0,216.4 582.5,216.4 584.0,216.4 585.5,216.4 587.0,216.4 588.5,216.4 590.0,217.3 591.5,216.4 593.0,216.4 594.5,216.4 596.0,216.4 597.5,217.3 599.0,217.3 600.5,216.4 602.0,216.4 603.5,216.4 605.0,216.4 606.5,216.4 608.0,216.4 609.5,216.4 611.0,217.3 612.5,217.3 614.0,216.4 615.5,216.4 617.0,216.4 618.5,216.4 620.0,217.3 621.5,216.4 623.0,216.4 624.5,216.4 626.0,216.4 627.5,216.4 629.0,216.4 630.0,216.4" fill="none" stroke="#2aa6d6" stroke-width="1.4" stroke-linejoin="round"/>
<polyline points="48.6,229.5 50.0,228.0 52.0,227.0 70.5,227.0 72.0,228.6 73.0,228.4 74.5,228.3 76.0,228.8 77.5,228.2 79.0,228.6 80.5,228.5 82.0,228.2 83.5,228.6 85.0,228.1 86.5,228.5 88.0,228.2 89.5,228.2 91.0,228.5 92.5,228.9 94.0,228.2 95.5,228.3 97.0,228.7 98.5,229.0 100.0,228.7 101.5,228.5 103.0,229.1 104.5,228.1 106.0,229.0 107.5,228.4 109.0,228.2 110.5,228.2 112.0,228.4 113.5,228.9 115.0,228.3 116.5,228.7 118.0,228.7 119.5,228.5 121.0,228.6 122.5,228.2 124.0,228.2 125.5,228.3 127.0,228.8 128.5,228.5 130.0,228.4 131.5,228.7 133.0,228.6 134.5,228.4 136.0,228.9 137.5,228.8 139.0,228.3 140.5,228.7 142.0,228.6 143.5,229.0 145.0,228.8 146.5,228.4 148.0,229.1 149.5,228.2 151.0,228.5 152.5,228.9 154.0,228.3 155.5,228.6 157.0,228.1 158.5,228.8 160.0,228.9 161.5,228.7 163.0,229.0 164.5,228.4 166.0,228.8 167.5,228.7 169.0,228.7 170.5,228.6 172.0,228.9 173.5,229.0 175.0,228.6 176.5,228.8 178.0,228.2 179.5,228.8 181.0,228.7 182.5,229.1 184.0,228.9 185.5,228.4 187.0,232.0 188.5,232.0 190.0,228.1 191.5,228.6 193.0,228.3 194.5,228.2 196.0,228.2 197.5,228.9 199.0,228.2 200.5,228.3 202.0,228.5 203.5,229.0 205.0,228.2 206.5,228.5 208.0,228.6 209.5,229.0 211.0,228.9 212.5,229.0 214.0,228.4 215.5,228.5 217.0,228.5 218.5,229.0 220.0,229.1 221.5,228.3 223.0,228.3 224.5,228.3 226.0,228.3 227.5,228.6 229.0,228.7 230.5,228.4 232.0,228.1 233.5,228.5 235.0,228.5 236.5,228.7 238.0,229.1 239.5,228.8 241.0,228.6 242.5,228.7 244.0,228.8 245.5,228.2 247.0,229.0 248.5,228.9 250.0,229.0 251.5,228.9 253.0,228.5 254.5,228.5 256.0,228.2 257.5,228.7 259.0,228.2 260.5,228.2 262.0,228.3 263.5,228.3 265.0,228.4 266.5,228.2 268.0,227.6 269.5,227.6 271.0,228.2 272.5,228.5 274.0,228.1 275.5,229.0 277.0,228.7 278.5,228.2 280.0,228.4 281.5,228.4 283.0,228.5 284.5,228.2 286.0,228.9 287.5,229.1 289.0,228.6 290.5,228.6 292.0,228.2 293.5,228.2 295.0,228.4 296.5,228.4 298.0,228.9 299.5,228.3 301.0,228.1 302.5,229.1 304.0,228.6 305.5,228.2 307.0,228.6 308.5,228.1 310.0,228.6 311.5,229.1 313.0,229.0 314.5,228.8 316.0,228.3 318.0,229.5 320.0,232.5 322.0,234.6 325.0,235.6 329.0,236.0 332.5,236.6 335.0,235.8 336.5,235.2 338.0,235.3 339.5,235.1 341.0,235.7 342.5,235.4 344.0,235.7 345.5,235.2 347.0,235.1 348.5,235.7 350.0,235.9 351.5,235.8 353.0,235.7 354.5,235.7 356.0,235.6 357.5,235.1 359.0,235.4 360.5,235.3 362.0,234.9 363.5,234.9 365.0,235.2 366.5,235.2 368.0,235.6 369.5,235.9 371.0,235.3 372.5,236.5 374.0,236.5 375.5,235.9 377.0,235.3 378.5,235.1 380.0,235.1 381.5,235.1 383.0,235.1 384.5,235.5 386.0,235.8 387.5,235.7 389.0,235.4 390.5,235.6 392.0,235.7 393.5,235.0 395.0,235.6 396.5,235.8 398.0,235.7 399.5,235.7 401.0,235.4 402.5,235.1 404.0,235.7 405.5,235.2 407.0,235.7 408.5,235.9 410.0,235.3 411.5,235.3 413.0,235.8 414.5,235.6 416.0,235.1 417.5,235.0 419.0,235.1 420.5,235.8 422.0,235.7 423.5,235.0 425.0,235.7 426.5,235.9 428.0,235.6 429.5,235.3 431.0,235.4 432.5,235.0 434.0,234.9 435.5,235.9 437.0,235.5 438.5,235.4 440.0,235.8 441.5,235.3 443.0,235.8 444.5,235.7 446.0,235.1 447.5,235.2 449.0,235.2 450.5,235.1 452.0,235.5 453.5,235.2 455.0,235.3 456.5,235.0 458.0,235.8 459.5,235.3 461.0,235.4 462.5,235.5 464.0,235.8 465.5,235.3 467.0,235.8 468.5,235.4 470.0,235.4 471.5,235.4 473.0,234.9 474.5,235.3 476.0,235.1 477.5,234.9 479.0,235.7 480.5,235.1 482.0,235.4 483.5,235.6 485.0,235.5 486.5,235.2 488.0,235.4 489.5,236.4 491.0,236.4 492.5,236.4 494.0,235.5 495.5,235.1 497.0,235.2 498.5,235.7 500.0,235.4 501.5,235.5 503.0,235.7 504.5,235.8 506.0,235.3 507.5,235.5 509.0,235.4 510.5,235.4 512.0,235.6 513.5,235.4 515.0,235.4 516.5,235.4 518.0,235.8 519.5,235.6 521.0,235.8 522.5,235.8 524.0,235.2 525.5,235.5 527.0,235.8 528.5,235.7 530.0,235.0 531.5,235.0 533.0,235.3 534.5,235.0 536.0,235.1 537.5,235.0 539.0,235.6 540.5,235.7 542.0,235.8 543.5,235.1 545.0,235.6 546.5,235.6 548.0,235.0 549.5,235.8 551.0,235.9 552.5,235.1 554.0,235.9 555.5,235.3 557.0,235.4 558.5,235.9 560.0,235.7 561.5,235.1 563.0,235.3 564.5,235.4 566.0,235.2 567.5,235.1 569.0,235.2 570.5,235.6 572.0,234.9 573.5,235.5 575.0,235.3 576.5,234.9 578.0,235.2 579.5,235.5 581.0,235.4 582.5,235.0 584.0,235.9 585.5,235.7 587.0,235.9 588.5,235.0 590.0,235.2 591.5,234.9 592.5,235.2 594.0,230.0 596.0,228.0 598.0,228.6 600.0,228.2 604.0,227.6 608.0,227.5 612.0,226.6 615.0,227.6 618.0,229.2 621.0,227.6 625.0,227.6 628.0,228.2 630.0,228.2" fill="none" stroke="#d67a1e" stroke-width="1.4" stroke-linejoin="round"/>
<rect x="33.6" y="520.4" width="620.3" height="93.5" fill="#000"/>
<rect x="36.0" y="522.0" width="615.9" height="90.5" fill="url(#g2)"/>
<polyline points="36.40,612.50 36.40,522.60 651.90,522.60" fill="none" stroke="#787878" stroke-width="1"/>
<line x1="55.50" y1="522.0" x2="55.50" y2="612.5" stroke="#868686" stroke-width="1"/>
<line x1="55.50" y1="613.9" x2="55.50" y2="616.9" stroke="#555" stroke-width="1"/>
<line x1="96.55" y1="522.0" x2="96.55" y2="612.5" stroke="#868686" stroke-width="1"/>
<line x1="96.55" y1="613.9" x2="96.55" y2="616.9" stroke="#555" stroke-width="1"/>
<line x1="137.60" y1="522.0" x2="137.60" y2="612.5" stroke="#868686" stroke-width="1"/>
<line x1="137.60" y1="613.9" x2="137.60" y2="616.9" stroke="#555" stroke-width="1"/>
<line x1="178.65" y1="522.0" x2="178.65" y2="612.5" stroke="#868686" stroke-width="1"/>
<line x1="178.65" y1="613.9" x2="178.65" y2="616.9" stroke="#555" stroke-width="1"/>
<line x1="219.70" y1="522.0" x2="219.70" y2="612.5" stroke="#868686" stroke-width="1"/>
<line x1="219.70" y1="613.9" x2="219.70" y2="616.9" stroke="#555" stroke-width="1"/>
<line x1="260.75" y1="522.0" x2="260.75" y2="612.5" stroke="#868686" stroke-width="1"/>
<line x1="260.75" y1="613.9" x2="260.75" y2="616.9" stroke="#555" stroke-width="1"/>
<line x1="301.80" y1="522.0" x2="301.80" y2="612.5" stroke="#868686" stroke-width="1"/>
<line x1="301.80" y1="613.9" x2="301.80" y2="616.9" stroke="#555" stroke-width="1"/>
<line x1="342.85" y1="522.0" x2="342.85" y2="612.5" stroke="#868686" stroke-width="1"/>
<line x1="342.85" y1="613.9" x2="342.85" y2="616.9" stroke="#555" stroke-width="1"/>
<line x1="383.90" y1="522.0" x2="383.90" y2="612.5" stroke="#868686" stroke-width="1"/>
<line x1="383.90" y1="613.9" x2="383.90" y2="616.9" stroke="#555" stroke-width="1"/>
<line x1="424.95" y1="522.0" x2="424.95" y2="612.5" stroke="#868686" stroke-width="1"/>
<line x1="424.95" y1="613.9" x2="424.95" y2="616.9" stroke="#555" stroke-width="1"/>
<line x1="466.00" y1="522.0" x2="466.00" y2="612.5" stroke="#868686" stroke-width="1"/>
<line x1="466.00" y1="613.9" x2="466.00" y2="616.9" stroke="#555" stroke-width="1"/>
<line x1="507.05" y1="522.0" x2="507.05" y2="612.5" stroke="#868686" stroke-width="1"/>
<line x1="507.05" y1="613.9" x2="507.05" y2="616.9" stroke="#555" stroke-width="1"/>
<line x1="548.10" y1="522.0" x2="548.10" y2="612.5" stroke="#868686" stroke-width="1"/>
<line x1="548.10" y1="613.9" x2="548.10" y2="616.9" stroke="#555" stroke-width="1"/>
<line x1="589.15" y1="522.0" x2="589.15" y2="612.5" stroke="#868686" stroke-width="1"/>
<line x1="589.15" y1="613.9" x2="589.15" y2="616.9" stroke="#555" stroke-width="1"/>
<line x1="630.20" y1="522.0" x2="630.20" y2="612.5" stroke="#868686" stroke-width="1"/>
<line x1="630.20" y1="613.9" x2="630.20" y2="616.9" stroke="#555" stroke-width="1"/>
<line x1="36.0" y1="531.05" x2="651.9" y2="531.05" stroke="#585858" stroke-width="1"/>
<line x1="36.0" y1="540.10" x2="651.9" y2="540.10" stroke="#8a8a8a" stroke-width="1"/>
<line x1="36.0" y1="549.15" x2="651.9" y2="549.15" stroke="#585858" stroke-width="1"/>
<line x1="36.0" y1="558.20" x2="651.9" y2="558.20" stroke="#8a8a8a" stroke-width="1"/>
<line x1="36.0" y1="567.25" x2="651.9" y2="567.25" stroke="#585858" stroke-width="1"/>
<line x1="36.0" y1="576.30" x2="651.9" y2="576.30" stroke="#8a8a8a" stroke-width="1"/>
<line x1="36.0" y1="585.35" x2="651.9" y2="585.35" stroke="#585858" stroke-width="1"/>
<line x1="36.0" y1="594.40" x2="651.9" y2="594.40" stroke="#8a8a8a" stroke-width="1"/>
<line x1="36.0" y1="603.45" x2="651.9" y2="603.45" stroke="#585858" stroke-width="1"/>
</svg>
</body>
</html>
